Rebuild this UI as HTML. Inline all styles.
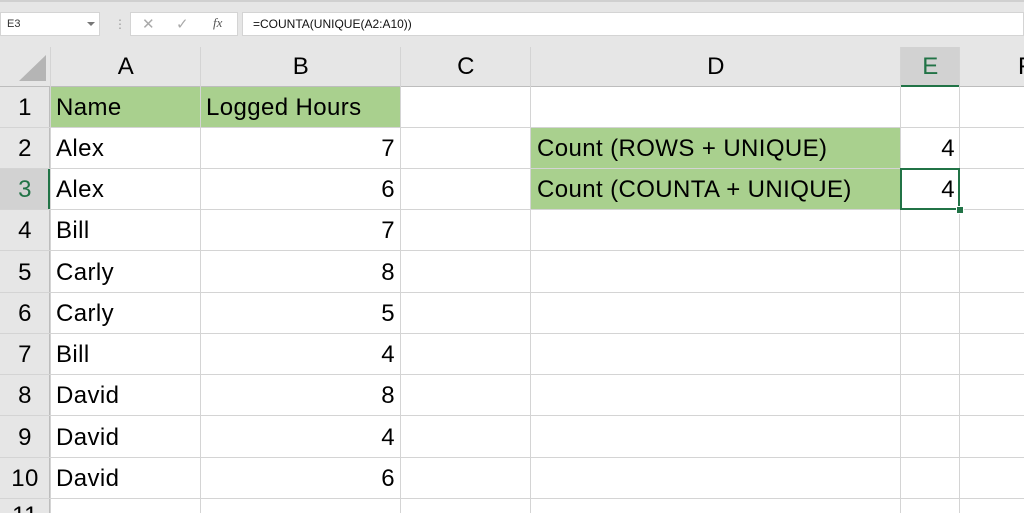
<html><head><style>
html,body{margin:0;width:1024px;height:513px;overflow:hidden;background:#fff;font-family:"Liberation Sans",sans-serif;position:relative}
.a{position:absolute}
.t{position:absolute;font-size:24px;color:#000;line-height:41px;letter-spacing:0.4px;white-space:nowrap}
</style></head><body>
<div class="a" style="left:0;top:0;width:1024px;height:47px;background:#e6e6e6"></div>
<div class="a" style="left:0;top:0;width:1024px;height:2px;background:#d0d0d0"></div>
<div class="a" style="left:0;top:12px;width:100px;height:24px;background:#fff;border:1px solid #d4d4d4;box-sizing:border-box;font-size:11px;line-height:22px;padding-left:6px;color:#333">E3</div>
<div class="a" style="left:87px;top:22px;border-left:4px solid transparent;border-right:4px solid transparent;border-top:4px solid #777"></div>
<div class="a" style="left:114px;top:17px;color:#999;font-size:12px">⋮</div>
<div class="a" style="left:130px;top:12px;width:108px;height:24px;background:#fff;border:1px solid #d4d4d4;box-sizing:border-box"></div>
<div class="a" style="left:142px;top:15px;color:#aaa;font-size:15px">✕</div>
<div class="a" style="left:176px;top:15px;color:#aaa;font-size:15px">✓</div>
<div class="a" style="left:213px;top:15px;color:#555;font-size:13px;font-style:italic;font-family:'Liberation Serif',serif">fx</div>
<div class="a" style="left:242px;top:12px;width:782px;height:24px;background:#fff;border:1px solid #d4d4d4;box-sizing:border-box;font-size:12px;line-height:22px;padding-left:10px;color:#111">=COUNTA(UNIQUE(A2:A10))</div>
<div class="a" style="left:0;top:47px;width:1024px;height:40px;background:#e6e6e6;border-bottom:1px solid #bdbdbd;box-sizing:border-box"></div>
<div class="a" style="left:901px;top:47px;width:58px;height:40px;background:#d2d2d2;border-bottom:2px solid #217346;box-sizing:border-box"></div>
<svg class="a" style="left:16px;top:55px" width="32" height="28"><polygon points="30,0 30,26 3,26" fill="#b5b5b5"/></svg>
<div class="a" style="left:0;top:87px;width:50px;height:426px;background:#e6e6e6;border-right:1px solid #bdbdbd;box-sizing:border-box"></div>
<div class="a" style="left:0;top:169px;width:50px;height:41px;background:#d2d2d2;border-right:2px solid #217346;box-sizing:border-box"></div>
<div class="a" style="left:51px;top:87px;width:349px;height:40px;background:#a9d08e"></div>
<div class="a" style="left:531px;top:128px;width:369px;height:82px;background:#a9d08e"></div>
<svg class="a" style="left:0;top:47px" width="1024" height="466">
<g stroke="#d4d4d4" stroke-width="1">
<line x1="50.5" y1="0" x2="50.5" y2="466"/><line x1="200.5" y1="0" x2="200.5" y2="466"/><line x1="400.5" y1="0" x2="400.5" y2="466"/><line x1="530.5" y1="0" x2="530.5" y2="466"/><line x1="900.5" y1="0" x2="900.5" y2="466"/><line x1="959.5" y1="0" x2="959.5" y2="466"/>
<line x1="0" y1="80.5" x2="1024" y2="80.5"/><line x1="0" y1="121.5" x2="1024" y2="121.5"/><line x1="0" y1="162.5" x2="1024" y2="162.5"/><line x1="0" y1="203.5" x2="1024" y2="203.5"/><line x1="0" y1="245.5" x2="1024" y2="245.5"/><line x1="0" y1="286.5" x2="1024" y2="286.5"/><line x1="0" y1="327.5" x2="1024" y2="327.5"/><line x1="0" y1="368.5" x2="1024" y2="368.5"/><line x1="0" y1="410.5" x2="1024" y2="410.5"/><line x1="0" y1="451.5" x2="1024" y2="451.5"/>
</g></svg>
<div class="a" style="left:900px;top:168px;width:60px;height:42px;border:2px solid #217346;box-sizing:border-box"></div>
<div class="a" style="left:956px;top:206px;width:6px;height:6px;background:#217346;border:1px solid #fff"></div>
<div class="t" style="left:51px;top:47px;width:150px;text-align:center;line-height:40px">A</div>
<div class="t" style="left:201px;top:47px;width:200px;text-align:center;line-height:40px">B</div>
<div class="t" style="left:401px;top:47px;width:130px;text-align:center;line-height:40px">C</div>
<div class="t" style="left:531px;top:47px;width:370px;text-align:center;line-height:40px">D</div>
<div class="t" style="left:901px;top:47px;width:59px;text-align:center;line-height:40px;color:#217346">E</div>
<div class="t" style="left:1018px;top:47px;line-height:40px">F</div>
<div class="t" style="left:0;top:87px;width:50px;text-align:center">1</div>
<div class="t" style="left:0;top:128px;width:50px;text-align:center">2</div>
<div class="t" style="left:0;top:169px;width:50px;text-align:center;color:#217346">3</div>
<div class="t" style="left:0;top:210px;width:50px;text-align:center">4</div>
<div class="t" style="left:0;top:252px;width:50px;text-align:center">5</div>
<div class="t" style="left:0;top:293px;width:50px;text-align:center">6</div>
<div class="t" style="left:0;top:334px;width:50px;text-align:center">7</div>
<div class="t" style="left:0;top:375px;width:50px;text-align:center">8</div>
<div class="t" style="left:0;top:417px;width:50px;text-align:center">9</div>
<div class="t" style="left:0;top:458px;width:50px;text-align:center">10</div>
<div class="t" style="left:0;top:502px;width:50px;text-align:center;line-height:28px">11</div>
<div class="t" style="left:56px;top:87px">Name</div>
<div class="t" style="left:56px;top:128px">Alex</div>
<div class="t" style="left:56px;top:169px">Alex</div>
<div class="t" style="left:56px;top:210px">Bill</div>
<div class="t" style="left:56px;top:252px">Carly</div>
<div class="t" style="left:56px;top:293px">Carly</div>
<div class="t" style="left:56px;top:334px">Bill</div>
<div class="t" style="left:56px;top:375px">David</div>
<div class="t" style="left:56px;top:417px">David</div>
<div class="t" style="left:56px;top:458px">David</div>
<div class="t" style="left:206px;top:87px">Logged Hours</div>
<div class="t" style="left:201px;top:128px;width:194px;text-align:right">7</div>
<div class="t" style="left:201px;top:169px;width:194px;text-align:right">6</div>
<div class="t" style="left:201px;top:210px;width:194px;text-align:right">7</div>
<div class="t" style="left:201px;top:252px;width:194px;text-align:right">8</div>
<div class="t" style="left:201px;top:293px;width:194px;text-align:right">5</div>
<div class="t" style="left:201px;top:334px;width:194px;text-align:right">4</div>
<div class="t" style="left:201px;top:375px;width:194px;text-align:right">8</div>
<div class="t" style="left:201px;top:417px;width:194px;text-align:right">4</div>
<div class="t" style="left:201px;top:458px;width:194px;text-align:right">6</div>
<div class="t" style="left:537px;top:128px">Count (ROWS + UNIQUE)</div>
<div class="t" style="left:537px;top:169px">Count (COUNTA + UNIQUE)</div>
<div class="t" style="left:901px;top:128px;width:54px;text-align:right">4</div>
<div class="t" style="left:901px;top:169px;width:54px;text-align:right">4</div>
</body></html>
